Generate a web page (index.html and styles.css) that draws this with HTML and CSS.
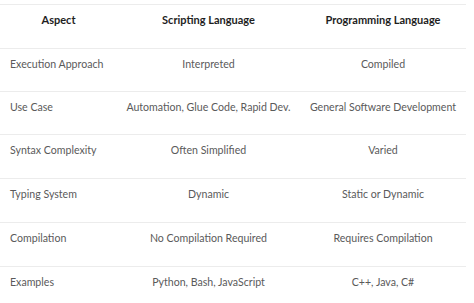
FILE: index.html
```html
<!DOCTYPE html>
<html>
<head>
<meta charset="utf-8">
<link rel="stylesheet" href="styles.css">
</head>
<body>
<table class="cmp">
  <colgroup>
    <col class="c1"><col class="c2"><col class="c3">
  </colgroup>
  <thead>
    <tr><th>Aspect</th><th>Scripting Language</th><th>Programming Language</th></tr>
  </thead>
  <tbody>
    <tr class="short"><td>Execution Approach</td><td>Interpreted</td><td>Compiled</td></tr>
    <tr class="short"><td>Use Case</td><td>Automation, Glue Code, Rapid Dev.</td><td>General Software Development</td></tr>
    <tr><td>Syntax Complexity</td><td>Often Simplified</td><td>Varied</td></tr>
    <tr><td>Typing System</td><td>Dynamic</td><td>Static or Dynamic</td></tr>
    <tr><td>Compilation</td><td>No Compilation Required</td><td>Requires Compilation</td></tr>
    <tr><td>Examples</td><td>Python, Bash, JavaScript</td><td>C++, Java, C#</td></tr>
  </tbody>
</table>
</body>
</html>
```
FILE: styles.css
```css
html, body {
  margin: 0;
  padding: 0;
  background: #ffffff;
}
body {
  padding-top: 4px;
  font-family: Lato, "Open Sans", sans-serif;
}
.cmp {
  width: 466px;
  border-collapse: collapse;
  table-layout: fixed;
}
.c1 { width: 117px; }
.c2 { width: 183px; }
.c3 { width: 166px; }
.cmp th, .cmp td {
  border-top: 1px solid #ececec;
  height: 44px;
  padding: 8px 8px 0;
  box-sizing: border-box;
  vertical-align: top;
  text-align: center;
  line-height: 14px;
  white-space: nowrap;
}
.cmp .short td {
  height: 43px;
}
.cmp th {
  font-size: 11px;
  font-weight: 700;
  color: #1e1e1e;
}
.cmp td {
  font-size: 10.6px;
  color: #5a5a5a;
  font-weight: 400;
}
.cmp td:first-child {
  text-align: left;
  padding-left: 10px;
}
```
